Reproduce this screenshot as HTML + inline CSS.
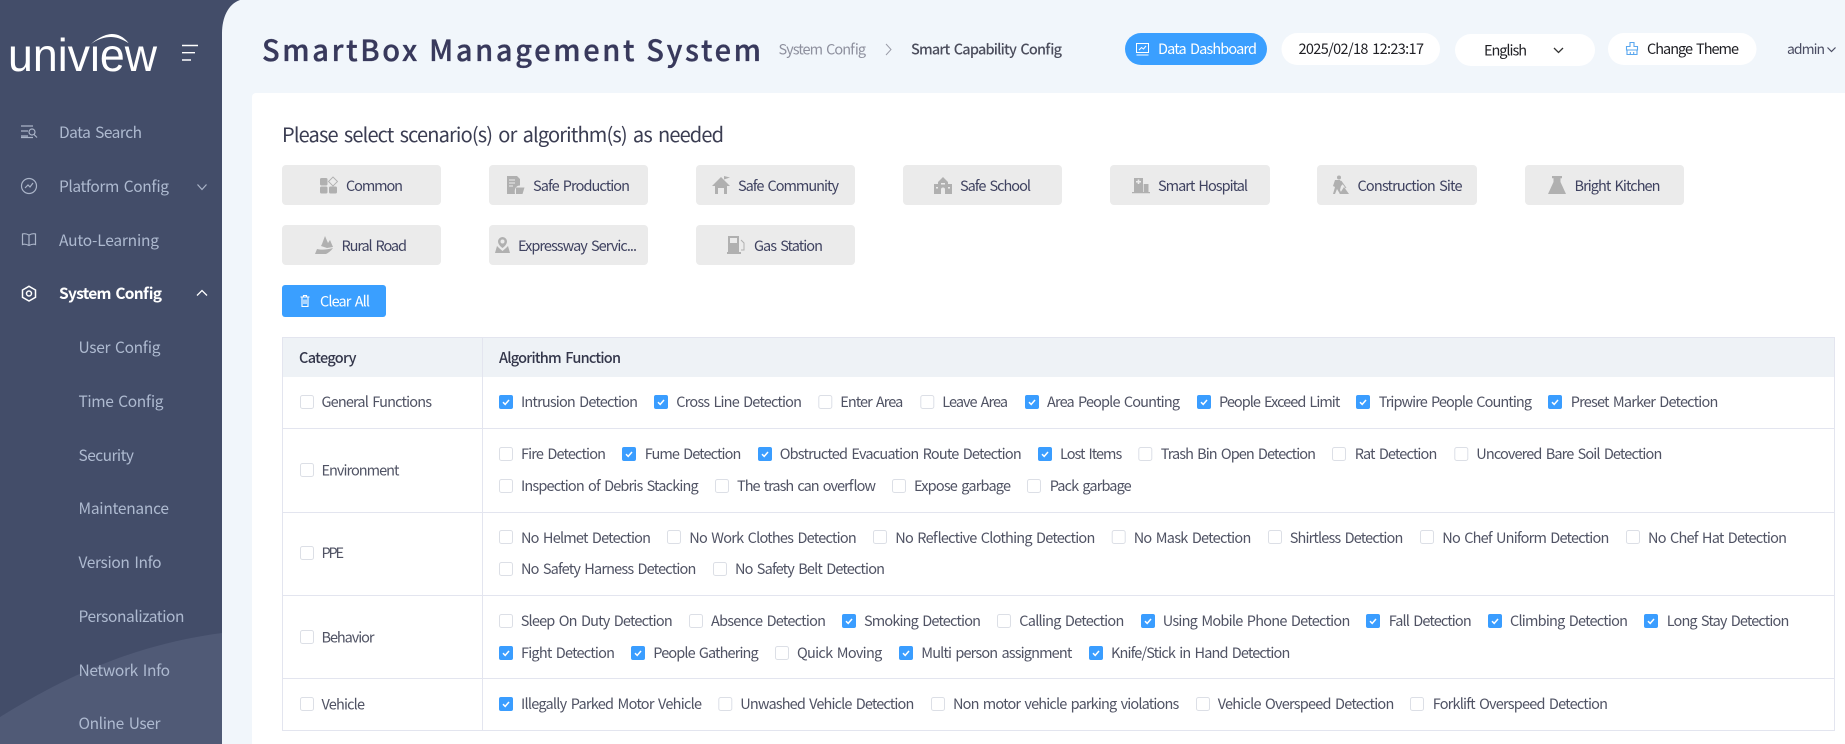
<!DOCTYPE html>
<html lang="en"><head><meta charset="utf-8"><title>SmartBox Management System</title>
<style>
html,body{margin:0;padding:0;width:1845px;height:744px;overflow:hidden;background:#fff}
svg{display:block}
text{font-family:"Noto Sans CJK SC","Liberation Sans",sans-serif;font-size:14.5px;fill:#505364;word-spacing:1.8px}
.s{fill:#aebad0;font-size:15.5px}
.sc{fill:#3f4260;font-size:14.5px}
.w{fill:#fff}
.h{fill:#33364a;font-weight:500}
.ic{fill:#b0b0b0}
.l{fill:none;stroke:#aab4c8;stroke-width:1.2}
</style></head><body>
<svg xmlns="http://www.w3.org/2000/svg" width="1845" height="744" viewBox="0 0 1845 744">
<defs>
<g id="c"><rect x=".5" y=".5" width="13" height="13" rx="2" fill="#fff" stroke="#dcdfe6"/></g>
<g id="k"><rect width="14" height="14" rx="2" fill="#3a9dff"/><path d="M4 7.2 6.2 9.4 10 5" fill="none" stroke="#fff" stroke-width="1.5"/></g>
</defs>

<!-- sidebar -->
<rect width="260" height="744" fill="#434d69"/>
<path d="M0 717C60 680 130 645 222 633V744H0Z" fill="#505a76"/>
<path d="M240 0C228 4 222 18 222 33V744H1845V0Z" fill="#f1f6fb"/>
<path d="M252 744V97a4 4 0 0 1 4-4H1845V744Z" fill="#fff"/>

<!-- logo -->
<text x="8" y="71" textLength="149" lengthAdjust="spacingAndGlyphs" style="font-family:'Liberation Sans',sans-serif;font-size:46px;fill:#fff;word-spacing:0">uniview</text>
<rect x="88" y="33" width="10" height="11" fill="#434d69"/>
<path d="M91 44C100 36 108 34 112 34C118 34 124 37 128.500 43C122 39 116 37 111 37C105 37 98 39 91 44Z" fill="#fff"/>
<path d="M182 45.500H198M182 52.700H195M182 60H191" stroke="#fff" stroke-width="1.400" fill="none"/>

<!-- sidebar icons -->
<path class="l" d="M21 126H33M21 131H28M21 136H28M21 137.500H33"/><circle class="l" cx="32" cy="132" r="3"/><path class="l" d="M34 134.500 37 137.500"/>
<circle class="l" cx="29" cy="186" r="7.500"/><path class="l" d="M25 188 28 185 30 187 33 183"/>
<path class="l" d="M29 235C26 233.500 24 233.500 22.500 234V244.500C24 244 26 244 29 245.500C32 244 34 244 35.500 244.500V234C34 233.500 32 233.500 29 235ZM29 235V245.500"/>
<path d="M29 286.300 35.500 290V297.300L29 301 22.500 297.300V290Z" fill="none" stroke="#fff" stroke-width="1.500"/><circle cx="29" cy="293.500" r="2.500" fill="none" stroke="#fff" stroke-width="1.500"/>
<path class="l" d="M197.500 184.500 202 189.500 206.500 184.500"/>
<path d="M197 295.500 202 290.500 207 295.500" fill="none" stroke="#fff" stroke-width="1.300"/>

<!-- sidebar text -->
<text class="s" x="59" y="138" textLength="83">Data Search</text>
<text class="s" x="59" y="192" textLength="110">Platform Config</text>
<text class="s" x="59" y="246" textLength="100">Auto-Learning</text>
<text class="w" x="59" y="299" textLength="103" style="font-size:15.5px;font-weight:700">System Config</text>
<text class="s" x="78.500" y="353" textLength="82">User Config</text>
<text class="s" x="78.500" y="407" textLength="85">Time Config</text>
<text class="s" x="78.500" y="461" textLength="55.500">Security</text>
<text class="s" x="78.500" y="514" textLength="90.500">Maintenance</text>
<text class="s" x="78.500" y="568" textLength="83">Version Info</text>
<text class="s" x="78.500" y="622" textLength="106">Personalization</text>
<text class="s" x="78.500" y="676" textLength="91.500">Network Info</text>
<text class="s" x="78.500" y="729" textLength="82">Online User</text>

<!-- top header -->
<text x="262" y="61" textLength="499" style="font-size:29px;font-weight:500;fill:#38395c;stroke:#38395c;stroke-width:.35;word-spacing:0">SmartBox Management System</text>
<text x="778.500" y="54.500" textLength="87.500" style="fill:#8e909e">System Config</text>
<path d="M886 44 891 49.500 886 55" fill="none" stroke="#9a9ca8" stroke-width="1"/>
<text x="911" y="54.500" textLength="151" style="font-weight:500;fill:#4b4d5c">Smart Capability Config</text>

<rect x="1125" y="33" width="142" height="32" rx="16" fill="#3a9fff"/>
<path d="M1136.500 43.500H1148.500V52.500H1136.500ZM1136.500 55H1148.500M1139 50 1141.500 47.500 1143.500 49 1146 46" fill="none" stroke="#fff" stroke-width="1"/>
<text class="w" x="1158" y="54" textLength="99">Data Dashboard</text>
<rect x="1281.500" y="33" width="158.500" height="32" rx="16" fill="#fff"/>
<text x="1298.500" y="54" textLength="125.500" style="fill:#1f1f24">2025/02/18 12:23:17</text>
<rect x="1455" y="34" width="140" height="32" rx="16" fill="#fff"/>
<text x="1484" y="55.500" textLength="43" style="fill:#1f1f24">English</text>
<path d="M1554 48 1558.500 52.500 1563 48" fill="none" stroke="#333" stroke-width="1.300"/>
<rect x="1608" y="33" width="148.500" height="32" rx="16" fill="#fff"/>
<path d="M1630 42.500H1634V46.500H1637.500V50H1626.500V46.500H1630ZM1627 50V54.500H1637V50M1630.300 52V54.500M1633.700 52V54.500" fill="none" stroke="#5aa7ee" stroke-width="1.100"/>
<text x="1647" y="54" textLength="92" style="fill:#1f1f24">Change Theme</text>
<text x="1787" y="54" textLength="38" style="fill:#4b4d63;font-size:14px">admin</text>
<path d="M1827.500 47.500 1831.500 51.500 1835.500 47.500" fill="none" stroke="#4b4d63" stroke-width="1.200"/>

<!-- heading -->
<text x="282" y="142" textLength="442" style="font-size:20px;fill:#3b3d52;word-spacing:2.5px">Please select scenario(s) or algorithm(s) as needed</text>

<!-- scenario buttons -->
<g fill="#ebebeb">
<rect x="282" y="165" width="159" height="40" rx="4"/><rect x="489" y="165" width="159" height="40" rx="4"/><rect x="696" y="165" width="159" height="40" rx="4"/><rect x="903" y="165" width="159" height="40" rx="4"/><rect x="1110" y="165" width="160" height="40" rx="4"/><rect x="1317" y="165" width="160" height="40" rx="4"/><rect x="1525" y="165" width="159" height="40" rx="4"/>
<rect x="282" y="225" width="159" height="40" rx="4"/><rect x="489" y="225" width="159" height="40" rx="4"/><rect x="696" y="225" width="159" height="40" rx="4"/>
</g>
<!-- scenario icons -->
<g class="ic">
<rect x="320" y="178" width="7.500" height="7.500" rx="1.500"/><rect x="320" y="186.500" width="7.500" height="7" rx="1.500"/><rect x="329" y="186.500" width="8" height="7" rx="1.500"/>
<path d="M333 177 337.500 181.500 333 186 328.500 181.500Z" fill="none" stroke="#b0b0b0" stroke-width=".9"/>
<path d="M507 176H517L520 179V185.500C516 185.500 514 189 515 194H507Z"/><path d="M516 187.500H524.500L522.500 194H516Z"/>
<path d="M509 180H515M509 183H515M509 186H513" stroke="#ebebeb" stroke-width="1"/>
<path d="M712 186 721 177 730 186H727V194H724V188H718V194H715V186Z"/><path d="M724 176 730 177.500 724 179.500Z"/>
<path d="M943 177 948 182V184H952V194H934V184H938V182ZM941 194V189.500A2 2 0 0 1 945 189.500V194ZM941 183V184.500H945V183ZM936 187V188.500H938V187ZM948 187V188.500H950V187Z" fill-rule="evenodd"/>
<path d="M1134 178H1143V192H1134ZM1138 179.500V184M1136 181.500H1140" fill-rule="evenodd"/><path d="M1137.700 179.500H1139.300V181H1141V182.500H1139.300V184H1137.700V182.500H1136V181H1137.700Z" fill="#ebebeb"/><path d="M1143.700 184H1148.500V192H1143.700ZM1132 192H1150V193.200H1132Z"/>
<circle cx="1339" cy="177.500" r="2"/><path d="M1335 180H1340L1343 184 1341 186 1340 190 1342 194H1340L1337 189 1335 194H1333L1335 187 1333 186Z"/><path d="M1344 187 1349 194H1339.500Z"/><path d="M1341 181 1346 188" stroke="#b0b0b0" stroke-width="1"/>
<path d="M1552 176H1562V178.200H1560.500V182L1566 194H1548L1553.500 182V178.200H1552Z"/>
<path d="M322 244 325 236 328 243 330 240 333 247 327 248 321 246Z"/><path d="M315 254 317 249C321 250 326 250 333 248 331 251 328 253 326 254Z"/>
<path d="M502.500 237A4.500 4.500 0 0 1 507 241.500C507 245 502.500 248 502.500 248S498 245 498 241.500A4.500 4.500 0 0 1 502.500 237ZM502.500 239.500A2 2 0 0 0 502.500 243.500A2 2 0 0 0 502.500 239.500Z" fill-rule="evenodd"/><path d="M497 246 499 248 502.500 251 506 248 508 246 510 253H495Z"/>
<path d="M728 236H739V252H741V254H727V252H728ZM730 238V243H737V238Z" fill-rule="evenodd"/><path d="M741 240 744 243V250H741" fill="none" stroke="#b0b0b0" stroke-width="1"/>
</g>
<!-- scenario text -->
<text class="sc" x="346" y="191" textLength="57">Common</text>
<text class="sc" x="533" y="191" textLength="97">Safe Production</text>
<text class="sc" x="738" y="191" textLength="101">Safe Community</text>
<text class="sc" x="960" y="191" textLength="71">Safe School</text>
<text class="sc" x="1158" y="191" textLength="90">Smart Hospital</text>
<text class="sc" x="1357.500" y="191" textLength="105">Construction Site</text>
<text class="sc" x="1574.500" y="191" textLength="86">Bright Kitchen</text>
<text class="sc" x="341.500" y="251" textLength="65.500">Rural Road</text>
<text class="sc" x="518" y="251" textLength="119">Expressway Servic...</text>
<text class="sc" x="754" y="251" textLength="69">Gas Station</text>

<!-- clear all -->
<rect x="282" y="285" width="104" height="32" rx="3" fill="#3a9fff"/>
<path d="M300.500 297H309.500M302 297V306.500H308V297M303.500 297V295.500H306.500V297M304 299.500V304M306 299.500V304" fill="none" stroke="#fff" stroke-width="1.100"/>
<text class="w" x="320" y="306.500" textLength="50">Clear All</text>

<!-- table -->
<rect x="282.500" y="337.500" width="1552" height="39.500" fill="#eef2f6"/>
<g fill="none" stroke="#e3e5ef" stroke-width="1">
<rect x="282.500" y="337.500" width="1552" height="393"/>
<path d="M482.500 337.500V730.500M282.500 428.500H1834.500M282.500 512.500H1834.500M282.500 595.500H1834.500M282.500 678.500H1834.500"/>
</g>
<text class="h" x="299" y="363" textLength="57.500">Category</text>
<text class="h" x="499" y="363" textLength="122">Algorithm Function</text>

<!-- category col -->
<use href="#c" x="300" y="395"/><text x="321.500" y="407" textLength="110.500">General Functions</text>
<use href="#c" x="300" y="463"/><text x="321.500" y="475.500" textLength="78">Environment</text>
<use href="#c" x="300" y="546"/><text x="321.500" y="558" textLength="22.500">PPE</text>
<use href="#c" x="300" y="630"/><text x="321.500" y="642.500" textLength="53">Behavior</text>
<use href="#c" x="300" y="697"/><text x="321.500" y="709.500" textLength="43.500">Vehicle</text>

<!-- row 1 -->
<use href="#k" x="499" y="395"/><text x="521" y="407" textLength="117">Intrusion Detection</text>
<use href="#k" x="654" y="395"/><text x="676.300" y="407" textLength="125.700">Cross Line Detection</text>
<use href="#c" x="818.300" y="395"/><text x="840.300" y="407" textLength="63">Enter Area</text>
<use href="#c" x="920.300" y="395"/><text x="942.300" y="407" textLength="65.700">Leave Area</text>
<use href="#k" x="1025" y="395"/><text x="1047" y="407" textLength="133">Area People Counting</text>
<use href="#k" x="1197" y="395"/><text x="1219" y="407" textLength="121.300">People Exceed Limit</text>
<use href="#k" x="1356" y="395"/><text x="1378.700" y="407" textLength="153.300">Tripwire People Counting</text>
<use href="#k" x="1548" y="395"/><text x="1570.700" y="407" textLength="147.600">Preset Marker Detection</text>

<!-- row 2 -->
<use href="#c" x="499" y="447"/><text x="521" y="459" textLength="85">Fire Detection</text>
<use href="#k" x="622" y="447"/><text x="644.700" y="459" textLength="96.600">Fume Detection</text>
<use href="#k" x="758" y="447"/><text x="779.700" y="459" textLength="242">Obstructed Evacuation Route Detection</text>
<use href="#k" x="1038" y="447"/><text x="1060" y="459" textLength="62.300">Lost Items</text>
<use href="#c" x="1138.300" y="447"/><text x="1160.700" y="459" textLength="155.300">Trash Bin Open Detection</text>
<use href="#c" x="1332" y="447"/><text x="1354.700" y="459" textLength="82.600">Rat Detection</text>
<use href="#c" x="1454.300" y="447"/><text x="1476.300" y="459" textLength="186">Uncovered Bare Soil Detection</text>
<use href="#c" x="499" y="479"/><text x="521" y="491" textLength="177.700">Inspection of Debris Stacking</text>
<use href="#c" x="715" y="479"/><text x="737" y="491" textLength="139">The trash can overflow</text>
<use href="#c" x="892" y="479"/><text x="914" y="491" textLength="97">Expose garbage</text>
<use href="#c" x="1027" y="479"/><text x="1049.700" y="491" textLength="82">Pack garbage</text>

<!-- row 3 -->
<use href="#c" x="499" y="530"/><text x="521" y="543" textLength="130">No Helmet Detection</text>
<use href="#c" x="667" y="530"/><text x="689.300" y="543" textLength="167.400">No Work Clothes Detection</text>
<use href="#c" x="873" y="530"/><text x="895.300" y="543" textLength="200">No Reflective Clothing Detection</text>
<use href="#c" x="1111.700" y="530"/><text x="1133.700" y="543" textLength="117.600">No Mask Detection</text>
<use href="#c" x="1268" y="530"/><text x="1289.700" y="543" textLength="113.600">Shirtless Detection</text>
<use href="#c" x="1420" y="530"/><text x="1442.300" y="543" textLength="167">No Chef Uniform Detection</text>
<use href="#c" x="1626" y="530"/><text x="1648" y="543" textLength="139">No Chef Hat Detection</text>
<use href="#c" x="499" y="562"/><text x="521" y="574" textLength="175.300">No Safety Harness Detection</text>
<use href="#c" x="713" y="562"/><text x="735" y="574" textLength="150">No Safety Belt Detection</text>

<!-- row 4 -->
<use href="#c" x="499" y="614"/><text x="520.700" y="626" textLength="152">Sleep On Duty Detection</text>
<use href="#c" x="689" y="614"/><text x="711" y="626" textLength="115">Absence Detection</text>
<use href="#k" x="842" y="614"/><text x="864" y="626" textLength="117">Smoking Detection</text>
<use href="#c" x="997" y="614"/><text x="1019.300" y="626" textLength="105">Calling Detection</text>
<use href="#k" x="1141" y="614"/><text x="1162.700" y="626" textLength="187.600">Using Mobile Phone Detection</text>
<use href="#k" x="1366" y="614"/><text x="1388.700" y="626" textLength="83">Fall Detection</text>
<use href="#k" x="1488" y="614"/><text x="1510" y="626" textLength="118">Climbing Detection</text>
<use href="#k" x="1644" y="614"/><text x="1666.700" y="626" textLength="122.600">Long Stay Detection</text>
<use href="#k" x="499" y="646"/><text x="521" y="658" textLength="94">Fight Detection</text>
<use href="#k" x="631" y="646"/><text x="653.300" y="658" textLength="105.400">People Gathering</text>
<use href="#c" x="775" y="646"/><text x="797" y="658" textLength="85.300">Quick Moving</text>
<use href="#k" x="899" y="646"/><text x="921.300" y="658" textLength="151">Multi person assignment</text>
<use href="#k" x="1089" y="646"/><text x="1111" y="658" textLength="179.300">Knife/Stick in Hand Detection</text>

<!-- row 5 -->
<use href="#k" x="499" y="697"/><text x="521" y="709" textLength="181">Illegally Parked Motor Vehicle</text>
<use href="#c" x="718.300" y="697"/><text x="740.300" y="709" textLength="174">Unwashed Vehicle Detection</text>
<use href="#c" x="931" y="697"/><text x="953" y="709" textLength="226.300">Non motor vehicle parking violations</text>
<use href="#c" x="1196" y="697"/><text x="1217.700" y="709" textLength="176.600">Vehicle Overspeed Detection</text>
<use href="#c" x="1410" y="697"/><text x="1432.700" y="709" textLength="175.300">Forklift Overspeed Detection</text>
</svg>
</body></html>
